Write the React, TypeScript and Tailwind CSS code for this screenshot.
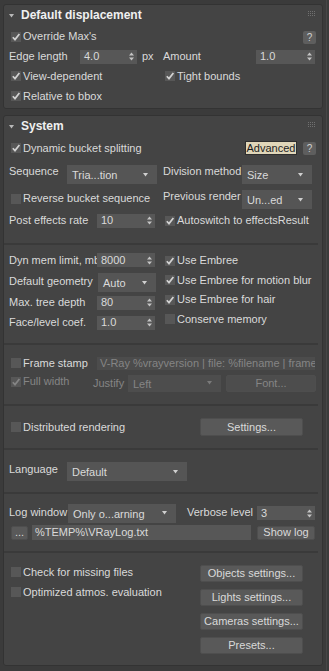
import React from "react";

const FONT = { fontFamily: '"Liberation Sans", Arial, sans-serif' };

function Box({ on, dis }: { on?: boolean; dis?: boolean }) {
  return (
    <div className="w-[10px] h-[10px] bg-[#575757] flex items-center justify-center shrink-0">
      {on && (
        <svg width="10" height="10" viewBox="0 0 10 10">
          <path d="M1.8 5.2 L4 7.6 L8.4 2" stroke={dis ? "#858585" : "#d2d2d2"} strokeWidth="1.7" fill="none" />
        </svg>
      )}
    </div>
  );
}

function Check({ on, dis, label }: { on?: boolean; dis?: boolean; label: string }) {
  return (
    <div className="flex items-center whitespace-nowrap">
      <Box on={on} dis={dis} />
      <span className={`ml-[2px] ${dis ? "text-[#858585]" : ""}`}>{label}</span>
    </div>
  );
}

function Arrows() {
  return (
    <svg width="5" height="9" viewBox="0 0 5 9" className="shrink-0">
      <path d="M0 3.5 L2.5 0.5 L5 3.5Z M0 5.5 L2.5 8.5 L5 5.5Z" fill="#c4c4c4" />
    </svg>
  );
}

function Spin({ v, w }: { v: string; w: string }) {
  return (
    <div className={`h-[14px] bg-[#575757] flex items-center justify-between pl-[4px] pr-[3px] shrink-0 ${w}`}>
      <span>{v}</span>
      <Arrows />
    </div>
  );
}

function Drop({ v, w, h, dis }: { v: string; w: string; h?: string; dis?: boolean }) {
  return (
    <div
      className={`${h ?? "h-[19px]"} ${w} ${dis ? "bg-[#4d4d4d] text-[#858585]" : "bg-[#555555]"} flex items-center justify-between pl-[5px] pr-[9px] shrink-0`}
    >
      <span className="mt-[2px] whitespace-nowrap">{v}</span>
      <svg width="5" height="4" viewBox="0 0 5 4">
        <path d="M0 0H5L2.5 3.5Z" fill={dis ? "#7a7a7a" : "#cfcfcf"} />
      </svg>
    </div>
  );
}

function Btn({ children, w, h, dis }: { children: React.ReactNode; w: string; h: string; dis?: boolean }) {
  return (
    <div
      className={`${w} ${h} ${dis ? "bg-[#4d4d4d] text-[#858585]" : "bg-[#595959]"} rounded-[2px] border border-[#4e4e4e] flex items-center justify-center whitespace-nowrap shrink-0`}
    >
      {children}
    </div>
  );
}

function Help() {
  return (
    <div className="w-[13px] h-[13px] bg-[#5e5e5e] rounded-[2px] flex items-center justify-center text-[10px] text-[#cfcfcf] shrink-0">
      ?
    </div>
  );
}

function Grip() {
  return (
    <svg width="8" height="6" viewBox="0 0 8 6" className="shrink-0">
      {[0, 2, 4, 6].map((x) =>
        [0, 2, 4].map((y) => <rect key={`${x}-${y}`} x={x} y={y} width="1" height="1" fill="#707070" />)
      )}
    </svg>
  );
}

function Header({ title }: { title: string }) {
  return (
    <div className="h-[21px] flex items-center">
      <svg width="5" height="4" viewBox="0 0 5 4" className="ml-[5px]">
        <path d="M0 0H5L2.5 3.5Z" fill="#b8b8b8" />
      </svg>
      <span className="ml-[7px] text-[12px] font-bold text-[#f0f0f0]">{title}</span>
      <div className="ml-auto mr-[6px] mt-[-4px]">
        <Grip />
      </div>
    </div>
  );
}

function Sep() {
  return <div className="h-[2px] mr-[4px] bg-[#3a3a3a]" />;
}

export default function App() {
  return (
    <div
      style={FONT}
      className="w-[329px] h-[671px] bg-[#3b3b3b] flex overflow-hidden text-[11px] leading-[13px] text-[#dadada]"
    >
      <div className="w-[323px] pl-[3px] pt-[4px] flex flex-col">
        {/* Panel 1 */}
        <div className="border border-[#333333] rounded-[3px] bg-[#444444] pb-[2px]">
          <Header title="Default displacement" />
          <div className="h-[21px] flex items-center">
            <div className="ml-[7px]">
              <Check on label="Override Max's" />
            </div>
            <div className="ml-auto mr-[6px] mt-[2px]">
              <Help />
            </div>
          </div>
          <div className="h-[19px] flex items-center">
            <div className="w-[159px] flex items-center pl-[5px]">
              <span className="w-[71px]">Edge length</span>
              <Spin v="4.0" w="w-[57px]" />
              <span className="ml-[5px]">px</span>
            </div>
            <div className="flex items-center">
              <span className="w-[93px]">Amount</span>
              <Spin v="1.0" w="w-[59px]" />
            </div>
          </div>
          <div className="h-[20px] flex items-center">
            <div className="w-[159px] pl-[7px]">
              <Check on label="View-dependent" />
            </div>
            <div className="pl-[2px]">
              <Check on label="Tight bounds" />
            </div>
          </div>
          <div className="h-[20px] flex items-center pl-[7px]">
            <Check on label="Relative to bbox" />
          </div>
        </div>

        {/* Panel 2 */}
        <div className="mt-[6px] border border-[#333333] rounded-[3px] bg-[#444444] pb-[11px]">
          <Header title="System" />
          <div className="h-[22px] flex items-center">
            <div className="ml-[7px]">
              <Check on label="Dynamic bucket splitting" />
            </div>
            <div className="ml-auto h-[14px] w-[52px] bg-[#e0d6b9] border border-[#2e2e2e] text-[#1c1c1c] flex items-center justify-center">
              Advanced
            </div>
            <div className="ml-[6px] mr-[6px]">
              <Help />
            </div>
          </div>
          <div className="h-[25px] flex items-start pt-[6px]">
            <div className="w-[159px] flex items-start pl-[5px]">
              <span className="w-[58px]">Sequence</span>
              <Drop v="Tria...tion" w="w-[90px]" />
            </div>
            <div className="flex items-start">
              <span className="w-[79px] whitespace-nowrap">Division method</span>
              <Drop v="Size" w="w-[70px]" />
            </div>
          </div>
          <div className="h-[25px] flex items-start pt-[6px]">
            <div className="w-[159px] pl-[7px] mt-[2px]">
              <Check label="Reverse bucket sequence" />
            </div>
            <div className="flex items-start">
              <span className="w-[79px] whitespace-nowrap">Previous render</span>
              <Drop v="Un...ed" w="w-[70px]" />
            </div>
          </div>
          <div className="h-[23px] flex items-center">
            <div className="w-[159px] flex items-center pl-[5px]">
              <span className="w-[88px] whitespace-nowrap">Post effects rate</span>
              <Spin v="10" w="w-[58px]" />
            </div>
            <div className="pl-[2px]">
              <Check on label="Autoswitch to effectsResult" />
            </div>
          </div>

          <div className="mt-[11px]">
            <Sep />
          </div>

          <div className="flex">
            <div className="w-[159px] pt-[5px] pl-[5px] flex flex-col">
              <div className="h-[20px] flex items-center">
                <span className="w-[88px] overflow-hidden whitespace-nowrap">Dyn mem limit, mb</span>
                <Spin v="8000" w="w-[58px]" />
              </div>
              <div className="h-[22px] flex items-center">
                <span className="w-[89px] whitespace-nowrap">Default geometry</span>
                <div className="self-end">
                  <Drop v="Auto" w="w-[58px]" />
                </div>
              </div>
              <div className="h-[21px] flex items-center">
                <span className="w-[88px] whitespace-nowrap">Max. tree depth</span>
                <Spin v="80" w="w-[58px]" />
              </div>
              <div className="h-[19px] flex items-center">
                <span className="w-[88px] whitespace-nowrap">Face/level coef.</span>
                <Spin v="1.0" w="w-[58px]" />
              </div>
            </div>
            <div className="pt-[6px] pl-[2px] flex flex-col">
              <div className="h-[19.5px] flex items-center">
                <Check on label="Use Embree" />
              </div>
              <div className="h-[19.5px] flex items-center">
                <Check on label="Use Embree for motion blur" />
              </div>
              <div className="h-[19.5px] flex items-center">
                <Check on label="Use Embree for hair" />
              </div>
              <div className="h-[19.5px] flex items-center">
                <Check label="Conserve memory" />
              </div>
            </div>
          </div>

          <div className="mt-[11px]">
            <Sep />
          </div>

          <div className="mt-[8px] h-[20px] flex items-center">
            <div className="w-[93px] pl-[7px]">
              <Check label="Frame stamp" />
            </div>
            <div className="w-[218px] h-[13px] bg-[#4c4c4c] text-[#858585] pl-[3px] overflow-hidden whitespace-nowrap flex items-center">
              V-Ray %vrayversion | file: %filename | frame: %frame
            </div>
          </div>
          <div className="h-[20px] flex items-center">
            <div className="w-[89px] pl-[7px] mb-[3px]">
              <Check on dis label="Full width" />
            </div>
            <span className="w-[35px] text-[#858585]">Justify</span>
            <Drop v="Left" w="w-[93px]" h="h-[17px]" dis />
            <div className="ml-[5px]">
              <Btn w="w-[90px]" h="h-[17px]" dis>
                Font...
              </Btn>
            </div>
          </div>

          <div className="mt-[11px]">
            <Sep />
          </div>

          <div className="mt-[11px] h-[20px] flex items-center">
            <div className="w-[196px] pl-[7px]">
              <Check label="Distributed rendering" />
            </div>
            <Btn w="w-[103px]" h="h-[18px]">
              Settings...
            </Btn>
          </div>

          <div className="mt-[11px]">
            <Sep />
          </div>

          <div className="mt-[10px] h-[21px] flex items-end pl-[5px]">
            <span className="w-[58px] mb-[5px]">Language</span>
            <Drop v="Default" w="w-[120px]" />
          </div>

          <div className="mt-[11px]">
            <Sep />
          </div>

          <div className="mt-[9px] h-[20px] flex items-center pl-[5px]">
            <span className="w-[59px] mb-[2px] whitespace-nowrap">Log window</span>
            <Drop v="Only o...arning" w="w-[108px]" />
            <span className="ml-[11px] w-[70px] mb-[2px] whitespace-nowrap">Verbose level</span>
            <Spin v="3" w="w-[58px]" />
          </div>
          <div className="mt-[2px] h-[15px] flex items-center">
            <div className="ml-[7px]">
              <Btn w="w-[17px]" h="h-[14px]">
                ...
              </Btn>
            </div>
            <div className="ml-[4px] w-[219px] h-[15px] bg-[#575757] pl-[3px] flex items-center">
              %TEMP%\VRayLog.txt
            </div>
            <div className="ml-[6px]">
              <Btn w="w-[58px]" h="h-[14px]">
                Show log
              </Btn>
            </div>
          </div>

          <div className="mt-[11px]">
            <Sep />
          </div>

          <div className="flex">
            <div className="w-[196px] pt-[9px] pl-[7px] flex flex-col">
              <div className="h-[20px] flex items-center">
                <Check label="Check for missing files" />
              </div>
              <div className="h-[20px] flex items-center">
                <Check label="Optimized atmos. evaluation" />
              </div>
            </div>
            <div className="pt-[12px] flex flex-col gap-[7px]">
              <Btn w="w-[103px]" h="h-[17px]">
                Objects settings...
              </Btn>
              <Btn w="w-[103px]" h="h-[17px]">
                Lights settings...
              </Btn>
              <Btn w="w-[103px]" h="h-[17px]">
                Cameras settings...
              </Btn>
              <Btn w="w-[103px]" h="h-[17px]">
                Presets...
              </Btn>
            </div>
          </div>
        </div>
      </div>
      <div className="w-[6px] flex justify-center">
        <div className="w-[1px] h-full bg-[#474747]" />
      </div>
    </div>
  );
}
